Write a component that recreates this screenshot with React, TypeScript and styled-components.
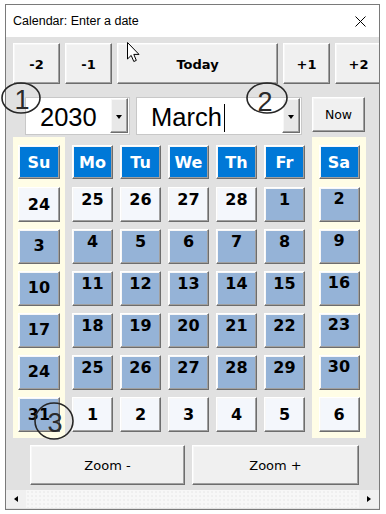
import React from 'react';
import styled, { createGlobalStyle } from 'styled-components';

const GlobalStyle = createGlobalStyle`
  html, body { margin: 0; padding: 0; background: #fff; }
  body { font-family: "DejaVu Sans", Verdana, sans-serif; }
  * { box-sizing: border-box; }
`;

const Page = styled.div`
  position: relative;
  width: 386px;
  height: 514px;
  overflow: hidden;
  padding: 4px 6px 0 5px;
  background: #fff;
`;

const Frame = styled.div`
  width: 375px;
  height: 506px;
  border: 1px solid #7a7a7a;
  background: #e1e1e1;
  display: flex;
  flex-direction: column;
  overflow: hidden;
`;

const TitleBar = styled.div`
  height: 32px;
  flex-shrink: 0;
  background: #fff;
  display: flex;
  align-items: center;
  justify-content: space-between;
  padding: 0 13px 0 7px;
  font-family: "Liberation Sans", Arial, sans-serif;
  font-size: 12.5px;
  color: #000;
`;

const raised = `
  border-top: 1px solid #ffffff;
  border-left: 1px solid #ffffff;
  border-right: 1px solid #6d6d6d;
  border-bottom: 1px solid #6d6d6d;
  box-shadow: inset -1px -1px 0 #a0a0a0, inset 1px 1px 0 #f7f7f7;
`;

const NavRow = styled.div`
  display: flex;
  gap: 5px;
  margin-top: 6px;
  padding-left: 7px;
  height: 41px;
  flex-shrink: 0;
`;

const NavButton = styled.div<{ $w: number }>`
  ${raised}
  width: ${p => p.$w}px;
  flex-shrink: 0;
  background: #f0f0f0;
  display: flex;
  align-items: center;
  justify-content: center;
  padding-top: 2px;
  font-weight: bold;
  font-size: 13px;
  color: #000;
`;

const ComboRow = styled.div`
  display: flex;
  align-items: flex-start;
  margin-top: 13px;
  padding-left: 19px;
  height: 38px;
  flex-shrink: 0;
`;

const Combo = styled.div<{ $w: number; $ml?: number }>`
  width: ${p => p.$w}px;
  height: 38px;
  margin-left: ${p => p.$ml || 0}px;
  background: #fff;
  border: 1px solid #c8c8c8;
  display: flex;
  align-items: stretch;
  padding: 0 1px 1px 0;
`;

const ComboText = styled.div`
  flex: 1;
  display: flex;
  align-items: center;
  padding: 4px 0 0 14px;
  font-family: "Liberation Sans", Arial, sans-serif;
  font-size: 25.5px;
  color: #000;
`;

const Caret = styled.span`
  display: inline-block;
  width: 1px;
  height: 28px;
  margin-left: 2px;
  background: #000;
`;

const DropButton = styled.div`
  ${raised}
  width: 18px;
  background: #e8e8e8;
  display: flex;
  justify-content: center;
  padding-top: 16px;
`;

const Arrow = styled.span`
  width: 0;
  height: 0;
  border-left: 3.5px solid transparent;
  border-right: 3.5px solid transparent;
  border-top: 4px solid #000;
`;

const NowButton = styled.div`
  ${raised}
  width: 53px;
  height: 35px;
  margin-left: 10px;
  background: #f0f0f0;
  display: flex;
  align-items: center;
  justify-content: center;
  font-size: 12.5px;
  color: #000;
`;

const Calendar = styled.div`
  display: flex;
  margin-top: 2px;
  padding-left: 7px;
  height: 301px;
  flex-shrink: 0;
`;

const DayColumn = styled.div<{ $w: number; $weekend?: boolean }>`
  width: ${p => p.$w}px;
  margin-left: ${p => (p.$weekend && p.$w === 52 ? 0 : 7)}px;
  background: ${p => (p.$weekend ? '#fffde6' : 'transparent')};
  padding: 8px 0 6px;
  display: flex;
  flex-direction: column;
  align-items: center;
  gap: 7px;
`;

const HeadCell = styled.div<{ $w: number }>`
  ${raised}
  width: ${p => p.$w}px;
  height: 34px;
  margin-bottom: 1px;
  flex-shrink: 0;
  background: #0078d7;
  color: #fff;
  font-weight: bold;
  font-size: 16px;
  display: flex;
  align-items: center;
  justify-content: center;
`;

const DayCell = styled.div<{ $w: number; $other: boolean; $raise: number }>`
  ${raised}
  width: ${p => p.$w}px;
  height: 35px;
  flex-shrink: 0;
  background: ${p => (p.$other ? '#f4f7fc' : '#95b3d7')};
  color: #000;
  font-weight: bold;
  font-size: 16px;
  display: flex;
  align-items: center;
  justify-content: center;
  padding-bottom: ${p => p.$raise}px;
`;

const ZoomRow = styled.div`
  display: flex;
  gap: 7px;
  margin-top: 7px;
  padding-left: 24px;
  height: 40px;
  flex-shrink: 0;
`;

const ZoomButton = styled.div<{ $w: number }>`
  ${raised}
  width: ${p => p.$w}px;
  background: #f0f0f0;
  display: flex;
  align-items: center;
  justify-content: center;
  font-size: 13px;
  color: #000;
`;

const ScrollBar = styled.div`
  display: flex;
  margin-top: 5px;
  height: 18px;
  flex-shrink: 0;
  background-color: #f7f7f7;
  background-image: radial-gradient(#e4e4e4 0.6px, transparent 0.8px);
  background-size: 4px 4px;
`;

const ScrollArrow = styled.div`
  width: 20px;
  background: #f0f0f0;
  display: flex;
  align-items: center;
  justify-content: center;
`;

const ScrollTrack = styled.div`
  flex: 1;
`;

const Tri = styled.span<{ $dir: 'left' | 'right' }>`
  width: 0;
  height: 0;
  border-top: 3.5px solid transparent;
  border-bottom: 3.5px solid transparent;
  ${p => (p.$dir === 'left' ? 'border-right: 4px solid #000;' : 'border-left: 4px solid #000;')}
`;

const Overlay = styled.svg`
  position: absolute;
  left: 0;
  top: 0;
  pointer-events: none;
`;

const names = ['Su', 'Mo', 'Tu', 'We', 'Th', 'Fr', 'Sa'];

// Feb 24 2030 .. Apr 6 2030, March 1 is a Friday
const days = Array.from({ length: 42 }, (_, i) => {
  if (i < 5) return { n: 24 + i, other: true };
  const d = i - 4;
  if (d <= 31) return { n: d, other: false };
  return { n: d - 31, other: true };
});

const colWidth = (c: number) => (c === 0 ? 52 : c === 6 ? 54 : 41);
const cellWidth = (c: number) => (c === 0 ? 42 : 41);

const raiseFor = (c: number, r: number, other: boolean) => {
  if (r === 5) return 0;
  if (c === 6) return other ? 0 : 12;
  if (c === 0) return other ? 0 : 3;
  return 10;
};

const App: React.FC = () => {
  return (
    <Page>
      <GlobalStyle />
      <Frame>
        <TitleBar>
          <span>Calendar: Enter a date</span>
          <svg width="11" height="11" viewBox="0 0 11 11">
            <path d="M0.5 0.5 L10.5 10.5 M10.5 0.5 L0.5 10.5" stroke="#000" strokeWidth="1" />
          </svg>
        </TitleBar>

        <NavRow>
          <NavButton $w={47}>-2</NavButton>
          <NavButton $w={47}>-1</NavButton>
          <NavButton $w={161}>Today</NavButton>
          <NavButton $w={47}>+1</NavButton>
          <NavButton $w={47}>+2</NavButton>
        </NavRow>

        <ComboRow>
          <Combo $w={105}>
            <ComboText>2030</ComboText>
            <DropButton><Arrow /></DropButton>
          </Combo>
          <Combo $w={166} $ml={6}>
            <ComboText>March<Caret /></ComboText>
            <DropButton><Arrow /></DropButton>
          </Combo>
          <NowButton>Now</NowButton>
        </ComboRow>

        <Calendar>
          {names.map((name, c) => (
            <DayColumn key={name} $w={colWidth(c)} $weekend={c === 0 || c === 6}>
              <HeadCell $w={cellWidth(c)}>{name}</HeadCell>
              {Array.from({ length: 6 }, (_, r) => {
                const d = days[r * 7 + c];
                return (
                  <DayCell key={r} $w={cellWidth(c)} $other={d.other} $raise={raiseFor(c, r, d.other)}>
                    {d.n}
                  </DayCell>
                );
              })}
            </DayColumn>
          ))}
        </Calendar>

        <ZoomRow>
          <ZoomButton $w={155}>Zoom -</ZoomButton>
          <ZoomButton $w={167}>Zoom +</ZoomButton>
        </ZoomRow>

        <ScrollBar>
          <ScrollArrow><Tri $dir="left" /></ScrollArrow>
          <ScrollTrack />
          <ScrollArrow><Tri $dir="right" /></ScrollArrow>
        </ScrollBar>
      </Frame>

      <Overlay width="386" height="514" viewBox="0 0 386 514">
        <g fill="none" stroke="#262626" strokeWidth="1.6">
          <ellipse cx="21" cy="98" rx="19" ry="15" />
          <ellipse cx="267" cy="98" rx="20" ry="15" />
          <ellipse cx="54" cy="421" rx="19" ry="18" />
        </g>
        <g fontFamily="Liberation Sans, Arial, sans-serif" fontSize="27" fill="#2a2a2a">
          <text x="22" y="109" textAnchor="middle">1</text>
          <text x="265" y="111" textAnchor="middle">2</text>
          <text x="55" y="432" textAnchor="middle">3</text>
        </g>
        <path
          d="M127.5 42.5 L127.5 59 L131.2 55.4 L133.8 61.5 L136.3 60.4 L133.8 54.4 L139 54.4 Z"
          fill="#fff"
          stroke="#000"
          strokeWidth="1"
          strokeLinejoin="round"
        />
      </Overlay>
    </Page>
  );
};

export default App;
